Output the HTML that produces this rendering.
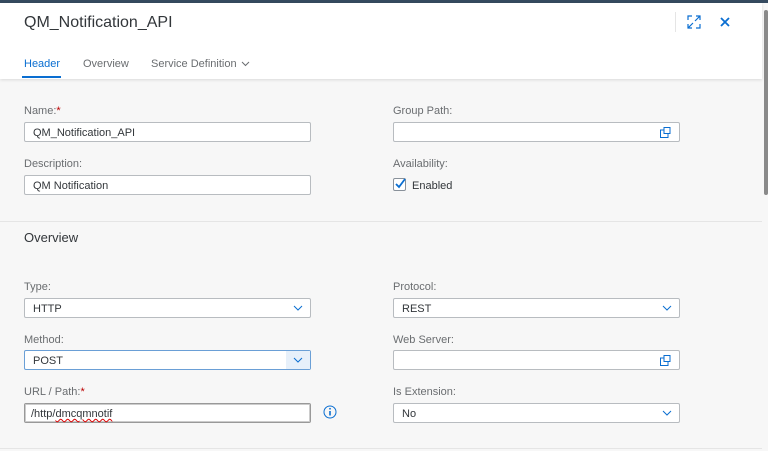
<!DOCTYPE html>
<html><head><style>
*{box-sizing:border-box;margin:0;padding:0}
body{width:768px;height:451px;overflow:hidden;background:#f7f7f7;font-family:"Liberation Sans",Arial,sans-serif;position:relative;color:#32363a}
.abs{position:absolute}
.top{left:0;top:0;width:768px;height:3px;background:#354a5f}
.hdr{left:0;top:3px;width:762px;height:76px;background:#fff;box-shadow:0 1px 3px rgba(0,0,0,.12)}
.lbl{font-size:11px;color:#6a6d70}
.req{color:#bb0000}
.inp{height:20px;background:#fff;border:1px solid #b8bcc0;border-radius:2px;font-size:11px;color:#32363a;padding:4px 0 0 8px}
.dd{position:absolute;right:0;top:0;width:24px;height:18px}
</style></head><body>
<div class="abs top"></div>
<div class="abs hdr"></div>
<div class="abs" style="left:24px;top:14px;font-size:16px;color:#32363a">QM_Notification_API</div>
<div class="abs" style="left:675px;top:12px;width:1px;height:20px;background:#e5e5e5"></div>
<svg class="abs" style="left:687px;top:15px" width="14" height="14" viewBox="0 0 14 14" fill="none" stroke="#0a6ed1" stroke-width="1.2"><path d="M1 5V1h4M9 1h4v4M13 9v4H9M5 13H1V9M8 6l4.5-4.5M6 8l-4.5 4.5"/></svg>
<svg class="abs" style="left:720px;top:17px" width="10" height="10" viewBox="0 0 10 10" stroke="#0a6ed1" stroke-width="1.8"><path d="M1 1l8 8M9 1l-8 8"/></svg>
<div class="abs" style="left:24px;top:58px;font-size:11px;color:#0a6ed1">Header</div>
<div class="abs" style="left:22px;top:76px;width:39px;height:2px;background:#0a6ed1"></div>
<div class="abs" style="left:83px;top:58px;font-size:11px;color:#6a6d70">Overview</div>
<div class="abs" style="left:151px;top:58px;font-size:11px;color:#6a6d70">Service Definition</div>
<svg class="abs" style="left:241px;top:61px" width="9" height="6" viewBox="0 0 9 6" fill="none" stroke="#6a6d70"><path d="M1 1l3.5 3.5L8 1"/></svg>
<div class="abs" style="left:764px;top:10px;width:4px;height:185px;background:#8a8a8a;border-radius:2px"></div>

<div class="abs lbl" style="left:24px;top:105px">Name:<span class="req">*</span></div>
<div class="abs inp" style="left:24px;top:122px;width:287px">QM_Notification_API</div>
<div class="abs lbl" style="left:393px;top:105px">Group Path:</div>
<div class="abs inp" style="left:393px;top:122px;width:287px"><svg class="abs" style="left:266px;top:4px" width="11" height="11" viewBox="0 0 11 11" fill="none" stroke="#0a6ed1"><rect x="4" y="0.5" width="6" height="6"/><path d="M4 3H0.5v7.5H8V7"/></svg></div>
<div class="abs lbl" style="left:24px;top:158px">Description:</div>
<div class="abs inp" style="left:24px;top:175px;width:287px">QM Notification</div>
<div class="abs lbl" style="left:393px;top:158px">Availability:</div>
<div class="abs" style="left:393px;top:178px;width:13px;height:13px;background:#fff;border:1px solid #89919a;border-radius:2px"></div>
<svg class="abs" style="left:394px;top:178px" width="12" height="12" viewBox="0 0 12 12" fill="none" stroke="#0a6ed1" stroke-width="1.8"><path d="M2 6l3 3 6-8"/></svg>
<div class="abs" style="left:412px;top:180px;font-size:11px;color:#32363a">Enabled</div>

<div class="abs" style="left:0;top:221px;width:762px;height:1px;background:#e5e5e5"></div>
<div class="abs" style="left:24px;top:230px;font-size:13px;color:#32363a">Overview</div>

<div class="abs lbl" style="left:24px;top:281px">Type:</div>
<div class="abs inp" style="left:24px;top:298px;width:287px">HTTP<svg class="dd" viewBox="0 0 24 18" fill="none" stroke="#0a6ed1"><path d="M8 7l4 4 4-4"/></svg></div>
<div class="abs lbl" style="left:393px;top:281px">Protocol:</div>
<div class="abs inp" style="left:393px;top:298px;width:287px">REST<svg class="dd" viewBox="0 0 24 18" fill="none" stroke="#0a6ed1"><path d="M8 7l4 4 4-4"/></svg></div>
<div class="abs lbl" style="left:24px;top:334px">Method:</div>
<div class="abs inp" style="left:24px;top:350px;width:287px;border-color:#6a9fd6">POST<div class="abs" style="right:0;top:0;width:24px;height:18px;background:#e7f0fa"></div><svg class="dd" viewBox="0 0 24 18" fill="none" stroke="#0a6ed1"><path d="M8 7l4 4 4-4"/></svg></div>
<div class="abs lbl" style="left:393px;top:334px">Web Server:</div>
<div class="abs inp" style="left:393px;top:350px;width:287px"><svg class="abs" style="left:266px;top:4px" width="11" height="11" viewBox="0 0 11 11" fill="none" stroke="#0a6ed1"><rect x="4" y="0.5" width="6" height="6"/><path d="M4 3H0.5v7.5H8V7"/></svg></div>
<div class="abs lbl" style="left:24px;top:386px">URL / Path:<span class="req">*</span></div>
<div class="abs inp" style="left:24px;top:403px;width:287px;border:1px solid #999;box-shadow:inset 0 0 0 1px #ccc;padding-left:6px">/http/<span style="text-decoration:underline wavy #d00;text-decoration-thickness:1px">dmcqmnotif</span></div>
<svg class="abs" style="left:323px;top:405px" width="14" height="14" viewBox="0 0 14 14" fill="none" stroke="#0a6ed1"><circle cx="7" cy="7" r="6"/><path d="M7 6v4.5" stroke-width="1.6"/><circle cx="7" cy="3.8" r=".9" fill="#0a6ed1" stroke="none"/></svg>
<div class="abs lbl" style="left:393px;top:386px">Is Extension:</div>
<div class="abs inp" style="left:393px;top:403px;width:287px">No<svg class="dd" viewBox="0 0 24 18" fill="none" stroke="#0a6ed1"><path d="M8 7l4 4 4-4"/></svg></div>
<div class="abs" style="left:0;top:448px;width:762px;height:1px;background:#e5e5e5"></div>
</body></html>
